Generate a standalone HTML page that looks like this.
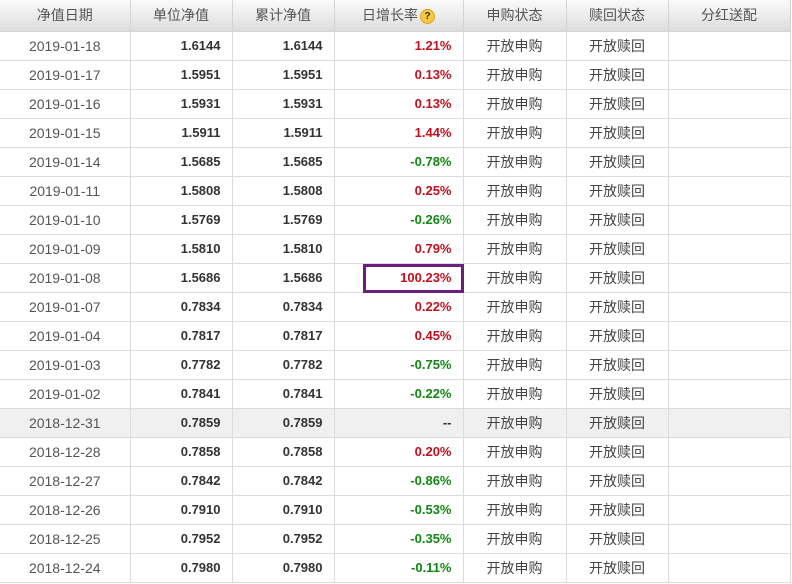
<!DOCTYPE html>
<html><head><meta charset="utf-8"><style>
*{margin:0;padding:0;box-sizing:border-box}
body{width:792px;height:584px;background:#fff;position:relative;overflow:hidden;font-family:"Liberation Sans","Noto Sans CJK SC",sans-serif;}
table{position:absolute;left:0;top:0;border-collapse:collapse;table-layout:fixed;width:790px}
td,th{border:1px solid #dcdcdc;height:29px;font-size:13px;color:#333;white-space:nowrap;overflow:hidden}
th{height:31px;font-weight:normal;font-size:14px;color:#555;background:linear-gradient(#fafafa,#e6e6e6 70%,#dcdcdc);border-color:#d4d4d4;border-top:none}
td{padding:0 11px 0 0}
td.c{text-align:center;padding:0;font-size:14px;color:#555}
td.r{text-align:right;font-weight:bold;color:#333}
td.red{color:#c40f1c}
td.grn{color:#118811}
td.z{font-family:"Noto Sans CJK SC",sans-serif;text-align:center;padding:0;font-size:14px;color:#444}
tr.g td{background:#f0f0f0}
td:first-child,th:first-child{border-left:none}
.q{display:inline-block;width:15px;height:15px;border-radius:50%;background:#f5c842;border:1px solid #d9a520;font-size:10px;line-height:13px;font-weight:bold;color:#333;text-align:center;vertical-align:1px;margin-left:2px}
.box{position:absolute;left:363px;top:264px;width:101px;height:29px;border:3px solid #6b1f7c}
</style></head><body>
<table>
<colgroup><col style="width:130px"><col style="width:102px"><col style="width:102px"><col style="width:129px"><col style="width:103px"><col style="width:102px"><col style="width:122px"></colgroup>
<tr><th>净值日期</th><th>单位净值</th><th>累计净值</th><th>日增长率<span class="q">?</span></th><th>申购状态</th><th>赎回状态</th><th>分红送配</th></tr>
<tr><td class="c">2019-01-18</td><td class="r">1.6144</td><td class="r">1.6144</td><td class="r red">1.21%</td><td class="z">开放申购</td><td class="z">开放赎回</td><td></td></tr>
<tr><td class="c">2019-01-17</td><td class="r">1.5951</td><td class="r">1.5951</td><td class="r red">0.13%</td><td class="z">开放申购</td><td class="z">开放赎回</td><td></td></tr>
<tr><td class="c">2019-01-16</td><td class="r">1.5931</td><td class="r">1.5931</td><td class="r red">0.13%</td><td class="z">开放申购</td><td class="z">开放赎回</td><td></td></tr>
<tr><td class="c">2019-01-15</td><td class="r">1.5911</td><td class="r">1.5911</td><td class="r red">1.44%</td><td class="z">开放申购</td><td class="z">开放赎回</td><td></td></tr>
<tr><td class="c">2019-01-14</td><td class="r">1.5685</td><td class="r">1.5685</td><td class="r grn">-0.78%</td><td class="z">开放申购</td><td class="z">开放赎回</td><td></td></tr>
<tr><td class="c">2019-01-11</td><td class="r">1.5808</td><td class="r">1.5808</td><td class="r red">0.25%</td><td class="z">开放申购</td><td class="z">开放赎回</td><td></td></tr>
<tr><td class="c">2019-01-10</td><td class="r">1.5769</td><td class="r">1.5769</td><td class="r grn">-0.26%</td><td class="z">开放申购</td><td class="z">开放赎回</td><td></td></tr>
<tr><td class="c">2019-01-09</td><td class="r">1.5810</td><td class="r">1.5810</td><td class="r red">0.79%</td><td class="z">开放申购</td><td class="z">开放赎回</td><td></td></tr>
<tr><td class="c">2019-01-08</td><td class="r">1.5686</td><td class="r">1.5686</td><td class="r red">100.23%</td><td class="z">开放申购</td><td class="z">开放赎回</td><td></td></tr>
<tr><td class="c">2019-01-07</td><td class="r">0.7834</td><td class="r">0.7834</td><td class="r red">0.22%</td><td class="z">开放申购</td><td class="z">开放赎回</td><td></td></tr>
<tr><td class="c">2019-01-04</td><td class="r">0.7817</td><td class="r">0.7817</td><td class="r red">0.45%</td><td class="z">开放申购</td><td class="z">开放赎回</td><td></td></tr>
<tr><td class="c">2019-01-03</td><td class="r">0.7782</td><td class="r">0.7782</td><td class="r grn">-0.75%</td><td class="z">开放申购</td><td class="z">开放赎回</td><td></td></tr>
<tr><td class="c">2019-01-02</td><td class="r">0.7841</td><td class="r">0.7841</td><td class="r grn">-0.22%</td><td class="z">开放申购</td><td class="z">开放赎回</td><td></td></tr>
<tr class="g"><td class="c">2018-12-31</td><td class="r">0.7859</td><td class="r">0.7859</td><td class="r">--</td><td class="z">开放申购</td><td class="z">开放赎回</td><td></td></tr>
<tr><td class="c">2018-12-28</td><td class="r">0.7858</td><td class="r">0.7858</td><td class="r red">0.20%</td><td class="z">开放申购</td><td class="z">开放赎回</td><td></td></tr>
<tr><td class="c">2018-12-27</td><td class="r">0.7842</td><td class="r">0.7842</td><td class="r grn">-0.86%</td><td class="z">开放申购</td><td class="z">开放赎回</td><td></td></tr>
<tr><td class="c">2018-12-26</td><td class="r">0.7910</td><td class="r">0.7910</td><td class="r grn">-0.53%</td><td class="z">开放申购</td><td class="z">开放赎回</td><td></td></tr>
<tr><td class="c">2018-12-25</td><td class="r">0.7952</td><td class="r">0.7952</td><td class="r grn">-0.35%</td><td class="z">开放申购</td><td class="z">开放赎回</td><td></td></tr>
<tr><td class="c">2018-12-24</td><td class="r">0.7980</td><td class="r">0.7980</td><td class="r grn">-0.11%</td><td class="z">开放申购</td><td class="z">开放赎回</td><td></td></tr>
</table>
<div class="box"></div>
</body></html>
